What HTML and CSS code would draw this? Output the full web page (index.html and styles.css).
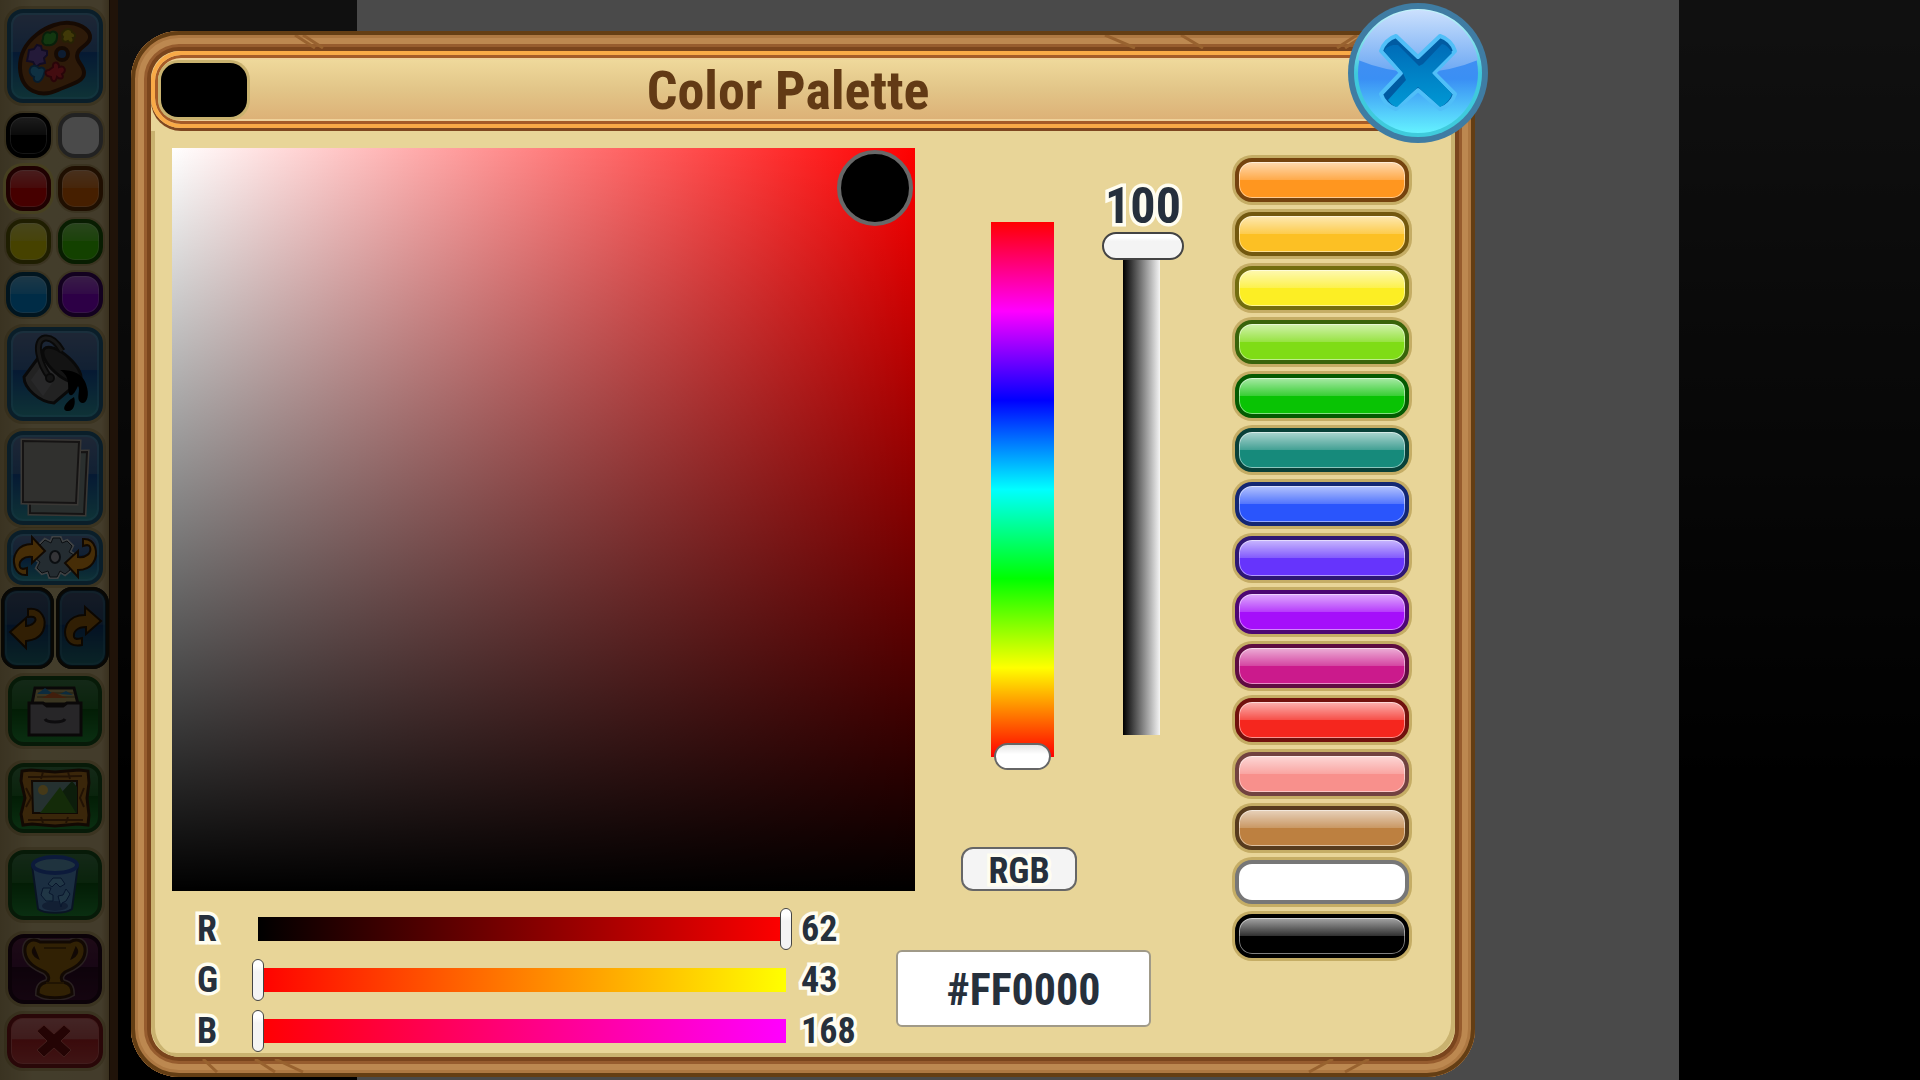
FILE: index.html
```
<!DOCTYPE html>
<html lang="en">
<head>
    <meta charset="UTF-8">
    <meta content="width=device-width, initial-scale=1.0" name="viewport">
    <title>Color Palette</title>
    <link rel="stylesheet" href="styles.css">
</head>
<body>

<div class="app">
    <nav class="toolbar">
        <button class="tool tool-blue tool-big" aria-label="Palette">
            <svg viewBox="0 0 96 94">
                <path d="M13 59C12 31 43 12 63 14c13 1 21 9 20 15-1 8-13 9-13 18 0 7 7 9 7 17 0 9-15 12-26 17-17 8-37 2-38-22z" fill="#9c5a20" stroke="#4e240c" stroke-width="4"/>
                <circle cx="55" cy="45" r="6" fill="#2d62a8" stroke="#4e240c" stroke-width="4"/>
                <path d="M36 30c0-6 4-8 7-6 3-3 8-1 7 4 0 6-5 9-9 8-4 1-7-3-5-6z" fill="#3fbf3a" stroke="#1c6a24" stroke-width="2"/>
                <path d="M56 23c3-5 9-3 9 0 5 2 3 6 1 6 2 5-3 6-5 3-4 2-7-1-5-4-2-2-1-4 0-5z" fill="#dcc41c" stroke="#857310" stroke-width="2"/>
                <path d="M22 41l5-1 3-4 4 1 1 4 5 1v4l-3 3 1 5-5 1-4 3-3-5-6-1 1-5z" fill="#7d5bc4" stroke="#3d2a78" stroke-width="2"/>
                <path d="M24 58c4-3 7 0 8 1 5-2 7 2 5 6-1 3-2 7-6 8-3 0-5-2-4-5-4-2-6-6-3-10z" fill="#35a5e0" stroke="#1c5f93" stroke-width="2"/>
                <path d="M46 58c-1-6 6-6 6 0 6-2 8 4 3 7 3 6-3 5-5 3-2 8-6 3-6 0-7-1-7-7-2-7z" fill="#e52a3a" stroke="#8c1220" stroke-width="2"/>
            </svg>
        </button>

        <div class="quick-colors">
            <button class="swatch black" aria-label="Black"></button>
            <button class="swatch white" aria-label="White"></button>
            <button class="swatch dark-red selected" aria-label="Red"></button>
            <button class="swatch dark-orange" aria-label="Orange"></button>
            <button class="swatch olive" aria-label="Yellow"></button>
            <button class="swatch grass" aria-label="Green"></button>
            <button class="swatch sky" aria-label="Blue"></button>
            <button class="swatch grape" aria-label="Purple"></button>
        </div>

        <button class="tool tool-blue tool-big" aria-label="Fill">
            <svg viewBox="0 0 96 94">
                <path d="M17 50L37 23l36 31-26 22C32 75 17 61 17 50z" fill="#777" stroke="#222" stroke-width="3"/>
                <path d="M24 53l14-19 14 12-16 23z" fill="#9a9aa0" opacity=".6"/>
                <ellipse cx="55" cy="38" rx="24" ry="10" transform="rotate(42 55 38)" fill="#444" stroke="#222" stroke-width="3"/>
                <path d="M53 43c10 0 22 2 26 14 5 14-1 22-6 18-4-4 1-13-2-16-3 6-6 12-9 8-2-8 2-17-9-24z" fill="#000"/>
                <path d="M67 70c2 6 0 14-6 14-7 0-4-8 6-14z" fill="#000"/>
                <path d="M43 51C32 37 26 13 38 11c7-1 13 6 17 13" fill="none" stroke="#222" stroke-width="7"/>
                <path d="M43 51C32 37 26 13 38 11c7-1 13 6 17 13" fill="none" stroke="#555" stroke-width="3"/>
                <circle cx="43" cy="51" r="4" fill="#444" stroke="#222" stroke-width="2"/>
            </svg>
        </button>

        <button class="tool tool-blue tool-big" aria-label="Pages">
            <svg viewBox="0 0 96 94">
                <path d="M23 22l57-1-3 62-54-1z" fill="#91a39f" stroke="#c8c0b8" stroke-width="5"/>
                <path d="M23 22l57-1-3 62-54-1z" fill="#91a39f" stroke="#4a4444" stroke-width="2"/>
                <path d="M16 10l56 1-3 61-53-1z" fill="#a6a69e" stroke="#c8c0b8" stroke-width="5"/>
                <path d="M16 10l56 1-3 61-53-1z" fill="#a6a69e" stroke="#4a4444" stroke-width="2"/>
            </svg>
        </button>

        <button class="tool tool-blue tool-mid" aria-label="Flip and rotate">
            <svg viewBox="0 0 96 55">
                <path d="M44 13l2-5h7l2 5 5-2 5 5-3 6 5 3v6l-5 3 1 6-5 4-5-3-3 6h-7l-2-6-6 2-5-5 3-6-5-4v-5l6-2-1-6 5-5z" fill="#7d98aa" stroke="#d4e0e6" stroke-width="4"/>
                <path d="M44 13l2-5h7l2 5 5-2 5 5-3 6 5 3v6l-5 3 1 6-5 4-5-3-3 6h-7l-2-6-6 2-5-5 3-6-5-4v-5l6-2-1-6 5-5z" fill="#7d98aa" stroke="#26323c" stroke-width="1"/>
                <ellipse cx="48" cy="27" rx="5" ry="6" fill="#b4b4bc" stroke="#26323c" stroke-width="2"/>
                <path id="arrow" d="M20 45C7 46 4 30 10 21c4-6 10-7 15-7V7l13 14-13 12v-6c-8-1-14 4-12 10 1 3 4 2 7 1z" fill="#f09c18" stroke="#3c2208" stroke-width="2"/>
                <use href="#arrow" transform="rotate(180 48 27)"/>
            </svg>
        </button>

        <div class="history">
            <button class="tool tool-blue tool-tall" aria-label="Undo">
                <svg viewBox="0 0 53 82">
                    <path d="M27 22c13-2 20 10 15 22-4 8-11 9-17 10v7L9 45l16-14v8c6 0 11-5 9-8-2-2-4-1-7-1z" fill="#f09c18" stroke="#3c2208" stroke-width="2"/>
                </svg>
            </button>
            <button class="tool tool-blue tool-tall" aria-label="Redo">
                <svg viewBox="0 0 53 82">
                    <path d="M26 58C11 61 6 48 11 37c4-7 11-9 18-9v-8l16 14-15 13v-7c-9 0-13 5-12 10 1 3 4 2 8 1z" fill="#f09c18" stroke="#3c2208" stroke-width="2"/>
                </svg>
            </button>
        </div>

        <div class="storage">
            <button class="tool tool-green" aria-label="Open drawing">
                <svg viewBox="0 0 94 70">
                    <path d="M24 28l3-16h39l4 16z" fill="#c9b873" stroke="#241c1c" stroke-width="3"/>
                    <path d="M30 17h36M29 21h38" stroke="#6d6238" stroke-width="1"/>
                    <path d="M29 18l8-6 8 6z" fill="#2a93d4"/>
                    <path d="M34 22l11-6 14 6z" fill="#e0672a"/>
                    <path d="M52 18l6-3 7 4z" fill="#2a93d4"/>
                    <path d="M21 27h14l4 3h16l4-3h14v32H21z" fill="#86828a" stroke="#241c1c" stroke-width="3"/>
                    <path d="M37 43c2 4 18 4 20 0" fill="none" stroke="#2e2a30" stroke-width="3"/>
                </svg>
            </button>
            <button class="tool tool-green" aria-label="Gallery">
                <svg viewBox="0 0 94 70">
                    <path d="M14 8l9-1 24 2 24-2 9 1 1 12-2 15 2 17-1 10-10-1-23 2-23-2-9 1-2-11 4-16-4-17z" fill="#c88424" stroke="#40200c" stroke-width="3"/>
                    <path d="M20 14l54-1M20 57h55M18 25l5 10-5 9M76 25l-4 10 4 9M35 9l-2 7M60 9l2 7M33 54l2 6M60 54l-2 6" stroke="#74400f" stroke-width="2" fill="none"/>
                    <path d="M24 18h45v32H25z" fill="#7fa9a6" stroke="#40200c" stroke-width="2"/>
                    <path d="M52 31l12-13 5 6v26H54z" fill="#2d6428"/>
                    <path d="M32 50l20-26 16 26z" fill="#479422"/>
                    <circle cx="35" cy="27" r="5" fill="#ecc452"/>
                </svg>
            </button>
            <button class="tool tool-green" aria-label="Recycle">
                <svg viewBox="0 0 94 70">
                    <path d="M24 15l6 44c6 5 28 5 34 0l6-44z" fill="#5f9fe0" stroke="#20477c" stroke-width="2"/>
                    <ellipse cx="47" cy="15" rx="22" ry="8" fill="#6dafd4" stroke="#2c5ccc" stroke-width="4"/>
                    <ellipse cx="47" cy="56" rx="13" ry="5" fill="#3e6ab0"/>
                    <path d="M40 34l5-6h8l4 6-5 3-4-4-4 4zM35 38l8 0-2 5 4 2v6h-7l-5-6zM50 46l5-1 3-6 4 5-4 7-4 2-1 4z" fill="#6fb9ee" stroke="#1c4a96" stroke-width="1"/>
                </svg>
            </button>
        </div>

        <button class="tool tool-plum" aria-label="Contest">
            <svg viewBox="0 0 94 70">
                <path d="M32 8h30c8-5 16 0 15 10-1 11-11 16-20 20-4 3-5 7-2 10 8 2 9 6 9 12-8 5-26 5-34 0 0-6 1-10 9-12 3-3 2-7-2-10-9-4-19-9-20-20-1-10 7-15 15-10z" fill="#a8730f" stroke="#8c7070" stroke-width="6"/>
                <path d="M32 8h30c8-5 16 0 15 10-1 11-11 16-20 20-4 3-5 7-2 10 8 2 9 6 9 12-8 5-26 5-34 0 0-6 1-10 9-12 3-3 2-7-2-10-9-4-19-9-20-20-1-10 7-15 15-10z" fill="#a8730f" stroke="#40200c" stroke-width="3"/>
                <path d="M26 14c-3 4 0 8 4 10zM68 14c3 4 0 8-4 10z" fill="#391032" stroke="#40200c" stroke-width="2"/>
                <path d="M38 49h18M36 14h22" stroke="#6e450a" stroke-width="2"/>
            </svg>
        </button>

        <button class="tool tool-red" aria-label="Close drawing">
            <svg viewBox="0 0 96 54">
                <path d="M37 11l10 9 10-9 7 6-10 10 10 9-7 7-10-9-10 9-7-7 10-9-10-10z" fill="#7c1010" stroke="#e46a62" stroke-width="1"/>
            </svg>
        </button>
    </nav>
    <main class="stage">
        <div class="paper"></div>
    </main>
</div>

<div class="overlay">
    <section class="dialog" role="dialog" aria-labelledby="dialog-title">
        <svg class="grain grain-top-left" width="40" height="14" viewBox="0 0 40 14"><path d="M4 0l20 13M12 0l20 13"/></svg>
        <svg class="grain grain-top-right" width="110" height="14" viewBox="0 0 110 14"><path d="M4 0l30 13M80 0l22 13"/></svg>
        <svg class="grain grain-top-edge" width="40" height="14" viewBox="0 0 40 14"><path d="M28 0L8 13M36 0L16 13"/></svg>
        <svg class="grain grain-bottom-left" width="110" height="14" viewBox="0 0 110 14"><path d="M4 0l14 13M56 0l20 13M76 0l28 13"/></svg>
        <svg class="grain grain-bottom-right" width="70" height="14" viewBox="0 0 70 14"><path d="M28 0L4 13M64 0L40 13"/></svg>
        <button class="close" aria-label="Close">
            <svg viewBox="0 0 140 140">
                <defs>
                    <linearGradient id="ball" x2="0" y2="1">
                        <stop offset="0" stop-color="#4f8ff0"/>
                        <stop offset=".55" stop-color="#3a8ff4"/>
                        <stop offset="1" stop-color="#64f2ff"/>
                    </linearGradient>
                    <linearGradient id="shine" x2="0" y2="1">
                        <stop offset="0" stop-color="#cbe0fd"/>
                        <stop offset="1" stop-color="#6ca8f3"/>
                    </linearGradient>
                    <linearGradient id="rim" x2="0" y2="1">
                        <stop offset="0" stop-color="#c6f6fb"/>
                        <stop offset=".5" stop-color="#3fc8dc"/>
                        <stop offset="1" stop-color="#3fcbdc"/>
                    </linearGradient>
                    <linearGradient id="cross" x2="0" y2="1">
                        <stop offset="0" stop-color="#006cb8"/>
                        <stop offset="1" stop-color="#0098d4"/>
                    </linearGradient>
                </defs>
                <circle cx="70" cy="70" r="70" fill="#3f7ca3"/>
                <circle cx="70" cy="70" r="64" fill="url(#rim)"/>
                <circle cx="70" cy="70" r="60" fill="url(#ball)"/>
                <path d="M10 57a61 61 0 0 1 120 0Q70 82 10 57z" fill="url(#shine)"/>
                <path d="M48 33l22 21 22-21c7 2 13 8 15 15L86 70l21 21c-2 7-8 13-15 15L70 87l-22 19c-7-2-13-8-15-15l20-21-20-22c2-7 8-13 15-15z" fill="#005ba2" stroke="#50bff8" stroke-width="4" stroke-linejoin="round"/>
                <path d="M50 42l21 21 4-2 19-20c5 1 8 5 10 9L84 70l20 21c-2 6-7 11-12 13L70 84l-21 20c-4-1-7-4-9-7l18-20-3-7-19-22c2-4 6-5 9-6z" fill="url(#cross)"/>
            </svg>
        </button>

        <header class="title-bar">
            <span class="current-color"></span>
            <h1 id="dialog-title">Color Palette</h1>
        </header>

        <div class="content">
            <div class="mixer">
                <div class="mixer-main">
                    <div class="field">
                        <span class="field-marker"></span>
                    </div>
                    <div class="side">
                        <div class="side-sliders">
                            <input class="slider hue" type="range" min="0" max="360" value="0" aria-label="Hue">
                            <div class="alpha-box">
                                <label class="label label-big" for="alpha">100</label>
                                <input class="slider alpha" id="alpha" type="range" min="0" max="100" value="100">
                            </div>
                        </div>
                        <button class="mode label">RGB</button>
                    </div>
                </div>
                <div class="mixer-values">
                    <div class="channels">
                        <div class="channel">
                            <label class="label" for="red">R</label>
                            <input class="slider red" id="red" type="range" min="0" max="255" value="255">
                            <output class="label" for="red">62</output>
                        </div>
                        <div class="channel">
                            <label class="label" for="green">G</label>
                            <input class="slider green" id="green" type="range" min="0" max="255" value="0">
                            <output class="label" for="green">43</output>
                        </div>
                        <div class="channel">
                            <label class="label" for="blue">B</label>
                            <input class="slider blue" id="blue" type="range" min="0" max="255" value="0">
                            <output class="label" for="blue">168</output>
                        </div>
                    </div>
                    <input class="hex" type="text" value="#FF0000" aria-label="Hex color">
                </div>
            </div>

            <div class="presets">
                <button class="swatch orange" aria-label="Orange"></button>
                <button class="swatch amber" aria-label="Amber"></button>
                <button class="swatch yellow" aria-label="Yellow"></button>
                <button class="swatch lime" aria-label="Lime"></button>
                <button class="swatch leaf" aria-label="Green"></button>
                <button class="swatch teal" aria-label="Teal"></button>
                <button class="swatch azure" aria-label="Blue"></button>
                <button class="swatch indigo" aria-label="Indigo"></button>
                <button class="swatch violet" aria-label="Violet"></button>
                <button class="swatch magenta" aria-label="Magenta"></button>
                <button class="swatch scarlet" aria-label="Red"></button>
                <button class="swatch pink" aria-label="Pink"></button>
                <button class="swatch tan" aria-label="Tan"></button>
                <button class="swatch white" aria-label="White"></button>
                <button class="swatch black" aria-label="Black"></button>
            </div>
        </div>
    </section>
</div>

</body>
</html>
```
FILE: styles.css
```
* {
    box-sizing: border-box;
}
html, body {
    height: 100%;
    margin: 0;
}
body {
    overflow: hidden;
    background: linear-gradient(#3a3a3a, #000 75%);
    font-family: "Liberation Sans Narrow", "Roboto Condensed", "Open Sans Condensed", "Liberation Sans", sans-serif;
}
button {
    padding: 0;
    border: 0;
    background: none;
    font-family: inherit;
    cursor: pointer;
}
svg {
    display: block;
}

/* Drawing app behind the dialog */
.app {
    display: flex;
    height: 100%;
}
.toolbar {
    width: 118px;
    flex-shrink: 0;
    display: flex;
    flex-direction: column;
    padding: 9px 7px 0;
    background: linear-gradient(90deg, #c8b074, #e8d294 30%, #e8cf94 92%, #c2a468);
    border-right: 8px solid #6e4420;
    box-shadow: inset -1px 0 0 #4a2c10;
}
.tool {
    width: 96px;
    height: 70px;
    flex-shrink: 0;
    margin: 0 auto;
    border-radius: 16px;
    overflow: hidden;
    outline: 3px solid rgb(120 90 20 / 25%);
}
/* Icons are drawn over the full button, border included */
.tool svg {
    width: calc(100% + 8px);
    height: calc(100% + 8px);
    margin: -4px;
}
.tool-blue {
    border: 4px solid #24698f;
    background: linear-gradient(#6a86b8, #3c70b0 45%, #1558b0 46%, #34b0bc);
    box-shadow: inset 0 0 0 2px rgb(80 190 230 / 50%);
}
.tool-big {
    height: 94px;
}
.tool-mid {
    height: 55px;
    margin-top: 5px;
}
.tool-tall {
    width: 53px;
    height: 82px;
    margin: 0;
    border-color: #16405c;
    outline-color: #302818;
    outline-offset: -3px;
    filter: brightness(.7);
}
.tool-green {
    width: 94px;
    border: 4px solid #185c1c;
    background: linear-gradient(#468c52, #247a2c 46%, #0c6414 47%, #24a03c);
}
.tool-plum {
    width: 94px;
    border: 4px solid #28081e;
    background: linear-gradient(#66264f, #541848 46%, #300a26 47%, #481438);
    margin-top: 14px;
}
.tool-red {
    height: 54px;
    margin-top: 10px;
    border: 4px solid #8c181c;
    background: linear-gradient(#e88080, #d86060 46%, #c82428 47%, #d84848);
    box-shadow: inset 0 0 0 1px #e06464;
}
.quick-colors {
    display: grid;
    grid-template-columns: 45px 45px;
    gap: 8px 7px;
    margin: 10px -1px;
}
.quick-colors + .tool {
    margin-bottom: 10px;
}
.history {
    display: flex;
    gap: 2px;
    margin: 2px -6px 7px;
}
.storage {
    display: flex;
    flex-direction: column;
    gap: 17px;
}
.stage {
    flex: 1;
    padding: 0 241px 0 239px;
}
.paper {
    height: 100%;
    background: #fff;
}

/* Glossy color buttons */
.swatch {
    height: 44px;
    border: 4px solid var(--edge);
    border-radius: 17px;
    background: linear-gradient(rgb(255 255 255 / 75%), rgb(255 255 255 / 20%) 49%, transparent 49%) border-box var(--color);
    box-shadow: inset 0 0 0 1px rgb(255 255 255 / 50%), 0 0 0 3px #c5ad65;
}
.quick-colors .swatch {
    height: 45px;
    background-image: linear-gradient(rgb(255 255 255 / 45%), rgb(255 255 255 / 15%) 49%, transparent 49%);
    box-shadow: inset 0 0 0 1px rgb(255 255 255 / 30%), 0 0 0 2px rgb(120 90 20 / 25%);
}
.quick-colors .selected {
    box-shadow: inset 0 0 0 1px rgb(255 255 255 / 30%), 0 0 0 3px #f0dc70;
}
.black {--color: #000; --edge: #000;}
.white {--color: #fff; --edge: #777;}
.dark-red {--color: #f00000; --edge: #6c0404;}
.dark-orange {--color: #f06c00; --edge: #6c3404;}
.olive {--color: #f0e400; --edge: #6c6804;}
.grass {--color: #44e000; --edge: #1c6404;}
.sky {--color: #0098f0; --edge: #04486c;}
.grape {--color: #9c00f0; --edge: #44046c;}
.orange {--color: #ff961f; --edge: #75430e;}
.amber {--color: #fcc024; --edge: #73580f;}
.yellow {--color: #fcee24; --edge: #736d0f;}
.lime {--color: #7fdc16; --edge: #39640a;}
.leaf {--color: #09c304; --edge: #045a02;}
.teal {--color: #168a7b; --edge: #094038;}
.azure {--color: #2a55fc; --edge: #132773;}
.indigo {--color: #6634fc; --edge: #2e1773;}
.violet {--color: #a50ffa; --edge: #4c0773;}
.magenta {--color: #cb1a8c; --edge: #5e0c41;}
.scarlet {--color: #f5261e; --edge: #71110d;}
.pink {--color: #f8908c; --edge: #724240;}
.tan {--color: #bd8040; --edge: #573b1d;}

/* Dialog */
.overlay {
    position: fixed;
    inset: 0;
    padding: 31px 445px 0 131px;
    background: rgb(0 0 0 / 71%);
}
.dialog {
    position: relative;
    padding: 20px;
    border-radius: 48px;
    background: #e8d598;
    box-shadow: inset 0 0 0 4px #643e14, inset 0 0 0 7px #ad7842, inset 0 0 0 13px #bc8850, inset 0 0 0 16px #965c2e, inset 0 0 0 20px #7a451d;
}
.grain {
    position: absolute;
    fill: none;
    stroke: #98622f;
    stroke-width: 3px;
}
.grain-top-left {top: 4px; left: 160px;}
.grain-top-right {top: 4px; left: 970px;}
.grain-top-edge {top: 4px; right: 106px;}
.grain-bottom-left {bottom: 4px; left: 68px;}
.grain-bottom-right {bottom: 4px; right: 100px;}

.close {
    position: absolute;
    top: -28px;
    right: -13px;
    width: 140px;
    height: 140px;
    border-radius: 50%;
}
.title-bar {
    display: flex;
    align-items: center;
    height: 77px;
    margin-bottom: 3px;
    padding: 0 122px 0 6px;
    border: 4px solid #f9aa47;
    border-radius: 30px;
    background: linear-gradient(#f1dc9e, #e2c588 50%, #dcae74);
    box-shadow: inset 0 0 0 3px #a55b28, inset 0 0 0 5px #efd29a, 0 3px 0 #7e4720;
}
.current-color {
    width: 86px;
    height: 54px;
    border-radius: 17px;
    background: #000;
    box-shadow: 0 0 0 3px #c9b26f;
}
.title-bar h1 {
    flex: 1;
    margin: 0;
    padding-top: 2px;
    text-align: center;
    font-size: 54px;
    line-height: 60px;
    color: #623a15;
}
.content {
    display: flex;
    gap: 51px;
    padding: 17px 46px 4px 21px;
    border-radius: 0 0 30px 30px;
    box-shadow: inset 4px 0 0 #c9b26f, inset -4px -4px 0 #c9b26f;
}
.mixer {
    flex: 1;
    display: flex;
    flex-direction: column;
    gap: 16px;
}
.mixer-main {
    display: flex;
}
.field {
    flex: 1;
    aspect-ratio: 1;
    display: flex;
    justify-content: flex-end;
    align-items: flex-start;
    padding: 2px;
    background: linear-gradient(transparent, #000), linear-gradient(90deg, #fff, #f00);
}
.field-marker {
    width: 76px;
    height: 76px;
    border: 4px solid #686868;
    border-radius: 50%;
    background: #000;
}
.side {
    width: 269px;
    display: flex;
    flex-direction: column;
    justify-content: space-between;
    padding-left: 46px;
}
.side-sliders {
    display: flex;
    justify-content: flex-end;
    align-items: flex-start;
    gap: 48px;
}
.alpha-box {
    width: 82px;
    display: flex;
    flex-direction: column;
    padding-top: 32px;
}
.label {
    font-size: 36px;
    line-height: 44px;
    font-weight: bold;
    color: #26303c;
    -webkit-text-stroke: 7px #fffdf0;
    paint-order: stroke fill;
}
.label-big {
    font-size: 50px;
    line-height: 52px;
    text-align: center;
}

/* The track is inset by half a thumb at both ends */
.slider {
    appearance: none;
    margin: 0;
    background-color: transparent;
}
.slider::-webkit-slider-thumb {
    appearance: none;
    width: 12px;
    height: 42px;
    border: 1px solid #444;
    border-radius: 14px;
    background: linear-gradient(#fff 15%, #f4f4f4 30%);
}
.hue, .alpha {
    writing-mode: vertical-lr;
    direction: rtl;
}
.hue {
    width: 63px;
    height: 562px;
    margin-top: 60px;
    background: linear-gradient(#f00, #f0f, #00f, #0ff, #0f0, #ff0, #f00) center / 100% calc(100% - 27px) no-repeat;
}
.hue::-webkit-slider-thumb {
    width: 57px;
    height: 27px;
    border-width: 2px;
    border-color: #666;
    background: linear-gradient(#e4e4e4, #fff 40%);
}
.alpha {
    width: 82px;
    height: 517px;
    background: linear-gradient(90deg, #000, #f4f4f4) 21px center / 37px calc(100% - 28px) no-repeat;
}
.alpha::-webkit-slider-thumb {
    width: 82px;
    height: 28px;
    border-width: 2px;
}
.mode {
    align-self: flex-start;
    width: 116px;
    height: 44px;
    border: 2px solid #666;
    border-radius: 12px;
    background: #f4f4f4;
}
.mixer-values {
    display: flex;
    align-items: center;
    padding-right: 33px;
}
.channels {
    flex: 1;
    display: flex;
    flex-direction: column;
    gap: 7px;
}
.channel {
    display: flex;
    padding-left: 25px;
}
.channel label {
    width: 55px;
}
.channel output {
    width: 95px;
    margin-left: 9px;
}
.channel .slider {
    flex: 1;
    min-width: 0;
    background-position: center;
    background-size: calc(100% - 12px) 24px;
    background-repeat: no-repeat;
}
.red {background-image: linear-gradient(90deg, #000, #f00);}
.green {background-image: linear-gradient(90deg, #f00, #ff0);}
.blue {background-image: linear-gradient(90deg, #f00, #f0f);}
.hex {
    width: 255px;
    height: 77px;
    margin-top: 16px;
    padding: 4px 0 0;
    border: 2px solid #a09a88;
    border-radius: 6px;
    background: #fff;
    text-align: center;
    font-family: inherit;
    font-size: 44px;
    font-weight: bold;
    color: #26303c;
}
.presets {
    width: 174px;
    display: flex;
    flex-direction: column;
    gap: 10px;
    padding-top: 10px;
}
```
